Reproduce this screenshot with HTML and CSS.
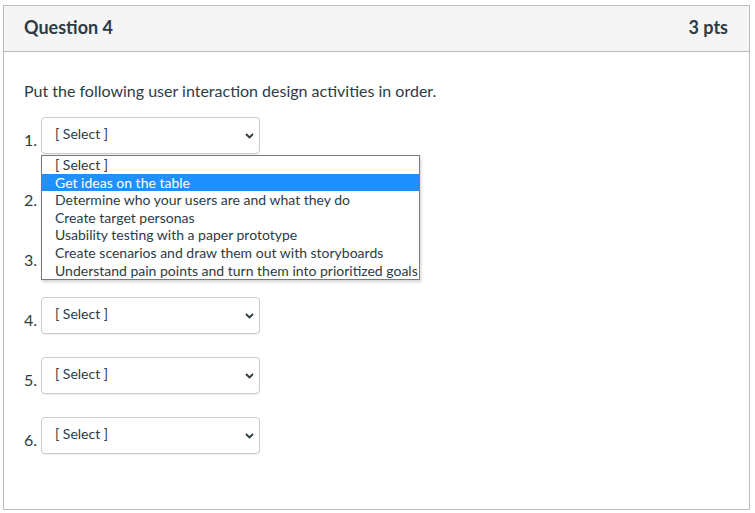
FILE: index.html
```html
<!DOCTYPE html>
<html>
<head>
<meta charset="utf-8">
<link rel="stylesheet" href="styles.css">
</head>
<body>
<div class="question">
  <div class="header">
    <span class="title">Question 4</span>
    <span class="pts">3 pts</span>
  </div>
  <div class="body">
    <p class="prompt">Put the following user interaction design activities in order.</p>
    <div class="rows">
      <div class="row"><span class="num">1.</span><div class="sel"><span>[ Select ]</span><svg class="chev" width="9" height="6" viewBox="0 0 9 6"><path d="M1 1 L4.5 4.5 L8 1" fill="none" stroke="#2d3b45" stroke-width="1.8"/></svg></div></div>
      <div class="row"><span class="num">2.</span><div class="sel covered"><span>[ Select ]</span><svg class="chev" width="9" height="6" viewBox="0 0 9 6"><path d="M1 1 L4.5 4.5 L8 1" fill="none" stroke="#2d3b45" stroke-width="1.8"/></svg></div></div>
      <div class="row"><span class="num">3.</span><div class="sel covered"><span>[ Select ]</span><svg class="chev" width="9" height="6" viewBox="0 0 9 6"><path d="M1 1 L4.5 4.5 L8 1" fill="none" stroke="#2d3b45" stroke-width="1.8"/></svg></div></div>
      <div class="row"><span class="num">4.</span><div class="sel"><span>[ Select ]</span><svg class="chev" width="9" height="6" viewBox="0 0 9 6"><path d="M1 1 L4.5 4.5 L8 1" fill="none" stroke="#2d3b45" stroke-width="1.8"/></svg></div></div>
      <div class="row"><span class="num">5.</span><div class="sel"><span>[ Select ]</span><svg class="chev" width="9" height="6" viewBox="0 0 9 6"><path d="M1 1 L4.5 4.5 L8 1" fill="none" stroke="#2d3b45" stroke-width="1.8"/></svg></div></div>
      <div class="row"><span class="num">6.</span><div class="sel"><span>[ Select ]</span><svg class="chev" width="9" height="6" viewBox="0 0 9 6"><path d="M1 1 L4.5 4.5 L8 1" fill="none" stroke="#2d3b45" stroke-width="1.8"/></svg></div></div>
    </div>
  </div>
  <ul class="dropdown">
    <li>[ Select ]</li>
    <li class="active">Get ideas on the table</li>
    <li>Determine who your users are and what they do</li>
    <li>Create target personas</li>
    <li>Usability testing with a paper prototype</li>
    <li>Create scenarios and draw them out with storyboards</li>
    <li>Understand pain points and turn them into prioritized goals</li>
  </ul>
</div>
</body>
</html>
```
FILE: styles.css
```css
html, body {
  margin: 0;
  padding: 0;
  background: #fff;
}
body {
  font-family: Lato, "Open Sans", sans-serif;
  color: #2d3b45;
}
.question {
  position: relative;
  margin: 5px 0 0 3px;
  width: 747px;
  height: 505px;
  box-sizing: border-box;
  border: 1px solid #b9bdc0;
}
.header {
  background: #f5f5f5;
  border-bottom: 1px solid #b9bdc0;
  display: flex;
  justify-content: space-between;
  align-items: center;
  padding: 0 21px 3px 20px;
  box-sizing: border-box;
  height: 46px;
  font-weight: bold;
  font-size: 18px;
}
.body {
  padding: 0 20px;
}
.prompt {
  margin: 29px 0 0 0;
  font-size: 16px;
  line-height: 20px;
}
.rows {
  margin-top: 16px;
  display: flex;
  flex-direction: column;
  gap: 23px;
}
.row {
  display: flex;
  align-items: flex-end;
  height: 37px;
}
.num {
  width: 17px;
  font-size: 16px;
  line-height: 20px;
  padding-bottom: 4px;
}
.sel {
  width: 219px;
  height: 37px;
  box-sizing: border-box;
  border: 1px solid #c7cdd1;
  border-radius: 4px;
  background: #fff;
  box-shadow: 0 1px 1px rgba(0,0,0,0.06);
  display: flex;
  align-items: center;
  justify-content: space-between;
  padding: 0 5px 4px 13px;
  font-size: 14px;
  line-height: 17px;
}
.sel.covered {
  visibility: hidden;
}
.chev {
  margin-top: 4px;
}
.dropdown {
  position: absolute;
  top: 149px;
  left: 37px;
  width: 377px;
  margin: 0;
  padding: 0;
  list-style: none;
  background: #fff;
  border: 1px solid #7a7a7a;
  box-shadow: 1px 2px 3px rgba(0,0,0,0.18);
  font-size: 14px;
  line-height: 17.6px;
}
.dropdown li {
  padding-left: 13px;
  white-space: nowrap;
}
.dropdown li.active {
  background: #1e90ff;
  color: #fff;
}
```
